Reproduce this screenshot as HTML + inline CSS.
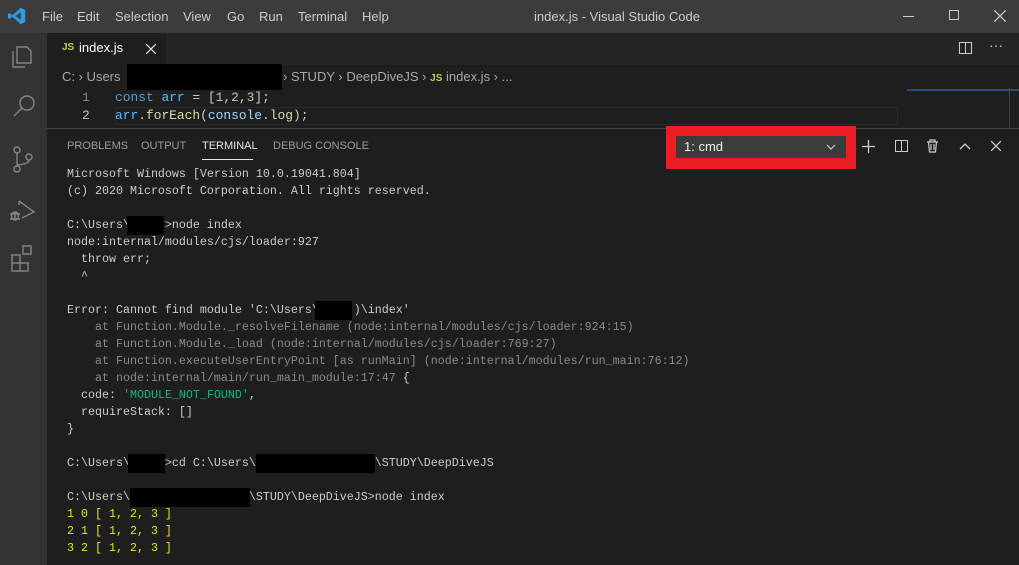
<!DOCTYPE html>
<html><head><meta charset="utf-8"><style>
*{margin:0;padding:0;box-sizing:border-box}
body{width:1019px;height:565px;background:#1e1e1e;position:relative;overflow:hidden;font-family:"Segoe UI","Liberation Sans",sans-serif;color:#ccc}
.a{position:absolute}
.t{position:absolute;left:67px;font-family:"Liberation Mono",monospace;font-size:11.67px;white-space:pre;color:#cccccc;line-height:17px}
.e{font-size:12.9px;line-height:18px}
.g{color:#8a8a8a}
.y{color:#e5e510}
.gr{color:#0dbc79}
.bk{position:absolute;background:#000}
.m{position:absolute;top:9px;font-size:13px;color:#ccc}
</style></head><body>
<div class="a" style="left:0;top:0;width:1019px;height:33px;background:#3c3c3c"></div>
<svg class="a" style="left:8px;top:7px" width="18" height="18" viewBox="0 0 24 24"><path d="M17 1 L23 4 V20 L17 23 L6 13 L2 16 L0 15 V9 L2 8 L6 11 Z M17 7 L10 12 L17 17 Z" fill="#2b9be6"/></svg>
<span class="m" style="left:42px">File</span><span class="m" style="left:77px">Edit</span><span class="m" style="left:115px">Selection</span><span class="m" style="left:183px">View</span><span class="m" style="left:227px">Go</span><span class="m" style="left:259px">Run</span><span class="m" style="left:298px">Terminal</span><span class="m" style="left:362px">Help</span>
<span class="m" style="left:534px">index.js - Visual Studio Code</span>
<div class="a" style="left:903px;top:16px;width:11px;height:1px;background:#ccc"></div>
<div class="a" style="left:949px;top:10px;width:10px;height:10px;border:1px solid #ccc"></div>
<svg class="a" style="left:994px;top:10px" width="12" height="12" stroke="#ccc" stroke-width="1.2"><path d="M0 0L12 12M12 0L0 12"/></svg>
<div class="a" style="left:0;top:33px;width:47px;height:532px;background:#333"></div>
<svg class="a" style="left:0;top:33px" width="47" height="250" fill="none" stroke="#858585" stroke-width="1.4">
<path d="M17 14h10l4 4v12H17z M13 18v16h12"/>
<circle cx="27" cy="70" r="7"/><path d="M22 75l-8 8"/>
<circle cx="17" cy="117" r="3"/><circle cx="17" cy="136" r="3"/><circle cx="29" cy="124" r="3"/><path d="M17 120v13 M29 127c0 5-12 4-12 6"/>
<path d="M19 168v4 M19 168l15 11-12 6" /><ellipse cx="15" cy="183" rx="3.5" ry="4"/><path d="M10 181h10 M10 186h10 M15 179v8"/>
<path d="M12 222h8v8h-8z M12 230h8v8h-8z M20 230h8v8h-8z M23 213h8v8h-8z"/>
</svg>
<div class="a" style="left:47px;top:33px;width:972px;height:32px;background:#252526"></div>
<div class="a" style="left:47px;top:33px;width:119px;height:32px;background:#1e1e1e"></div>
<span class="a" style="left:62px;top:42px;font-size:10px;font-weight:bold;color:#cbcb41">JS</span>
<span class="a" style="left:79px;top:40px;font-size:13px;color:#fff">index.js</span>
<svg class="a" style="left:146px;top:44px" width="10" height="10" stroke="#ddd" stroke-width="1.3"><path d="M0 0L10 10M10 0L0 10"/></svg>
<div class="a" style="left:959px;top:42px;width:13px;height:12px;border:1px solid #ccc"></div><div class="a" style="left:965px;top:42px;width:1px;height:12px;background:#ccc"></div>
<span class="a" style="left:989px;top:37px;font-size:14px;color:#ccc">···</span>
<div class="a" style="left:62px;top:69px;font-size:13px;color:#a9a9a9;white-space:pre">C: › Users</div>
<div class="bk" style="left:127px;top:64px;width:155px;height:26px"></div>
<div class="a" style="left:283px;top:69px;font-size:13px;color:#a9a9a9;white-space:pre">› STUDY › DeepDiveJS › <span style="color:#cbcb41;font-size:10px;font-weight:bold">JS</span> index.js › ...</div>
<div class="a" style="left:115px;top:107px;width:783px;height:18px;border:1px solid #282828"></div>
<div class="t e" style="left:82px;top:89px;color:#858585">1</div>
<div class="t e" style="left:82px;top:107px;color:#c6c6c6">2</div>
<div class="t e" style="left:115px;top:89px"><span style="color:#569cd6">const</span> <span style="color:#4fc1ff">arr</span> = [<span style="color:#b5cea8">1</span>,<span style="color:#b5cea8">2</span>,<span style="color:#b5cea8">3</span>];</div>
<div class="t e" style="left:115px;top:107px"><span style="color:#4fc1ff">arr</span>.<span style="color:#dcdcaa">forEach</span>(<span style="color:#9cdcfe">console</span>.<span style="color:#dcdcaa">log</span>);</div>
<div class="a" style="left:907px;top:89px;width:112px;height:2px;background:#264f78"></div>
<div class="a" style="left:1009px;top:88px;width:1px;height:40px;background:#444"></div>
<div class="a" style="left:47px;top:128px;width:972px;height:1px;background:#444"></div>
<span class="a" style="left:67px;top:140px;font-size:11px;color:#9d9d9d">PROBLEMS</span>
<span class="a" style="left:141px;top:140px;font-size:11px;color:#9d9d9d">OUTPUT</span>
<span class="a" style="left:202px;top:140px;font-size:11px;color:#e7e7e7">TERMINAL</span>
<div class="a" style="left:202px;top:159px;width:51px;height:1px;background:#e7e7e7"></div>
<span class="a" style="left:273px;top:140px;font-size:11px;color:#9d9d9d">DEBUG CONSOLE</span>
<div class="a" style="left:666px;top:126px;width:190px;height:43px;background:#ec1c24"></div>
<div class="a" style="left:676px;top:136px;width:170px;height:22px;background:#3c3c3c"></div>
<span class="a" style="left:684px;top:139px;font-size:13px;color:#f0f0f0">1: cmd</span>
<svg class="a" style="left:826px;top:144px" width="10" height="6" fill="none" stroke="#ccc" stroke-width="1.2"><path d="M1 1l4 4 4-4"/></svg>
<svg class="a" style="left:862px;top:140px" width="13" height="13" stroke="#ccc" stroke-width="1.3"><path d="M6.5 0v13M0 6.5h13"/></svg>
<div class="a" style="left:895px;top:140px;width:13px;height:12px;border:1px solid #ccc"></div><div class="a" style="left:901px;top:140px;width:1px;height:12px;background:#ccc"></div>
<svg class="a" style="left:926px;top:139px" width="13" height="14" fill="none" stroke="#ccc" stroke-width="1.2"><path d="M1 3h11 M4 3V1h5v2 M2.5 3l1 10h6l1-10 M5 5v6 M8 5v6"/></svg>
<svg class="a" style="left:959px;top:142px" width="12" height="8" fill="none" stroke="#ccc" stroke-width="1.3"><path d="M1 7l5-5 5 5"/></svg>
<svg class="a" style="left:991px;top:141px" width="10" height="10" stroke="#ccc" stroke-width="1.3"><path d="M0 0L10 10M10 0L0 10"/></svg>
<div class="t" style="top:166px">Microsoft Windows [Version 10.0.19041.804]</div>
<div class="t" style="top:183px">(c) 2020 Microsoft Corporation. All rights reserved.</div>
<div class="t" style="top:217px">C:\Users\     >node index</div>
<div class="t" style="top:234px">node:internal/modules/cjs/loader:927</div>
<div class="t" style="top:251px">  throw err;</div>
<div class="t" style="top:268px">  ^</div>
<div class="t" style="top:302px">Error: Cannot find module 'C:\Users\     )\index'</div>
<div class="t g" style="top:319px">    at Function.Module._resolveFilename (node:internal/modules/cjs/loader:924:15)</div>
<div class="t g" style="top:336px">    at Function.Module._load (node:internal/modules/cjs/loader:769:27)</div>
<div class="t g" style="top:353px">    at Function.executeUserEntryPoint [as runMain] (node:internal/modules/run_main:76:12)</div>
<div class="t" style="top:370px"><span class="g">    at node:internal/main/run_main_module:17:47</span> {</div>
<div class="t" style="top:387px">  code: <span class="gr">'MODULE_NOT_FOUND'</span>,</div>
<div class="t" style="top:404px">  requireStack: []</div>
<div class="t" style="top:421px">}</div>
<div class="t" style="top:455px">C:\Users\     >cd C:\Users\                 \STUDY\DeepDiveJS</div>
<div class="t" style="top:489px">C:\Users\                 \STUDY\DeepDiveJS>node index</div>
<div class="t y" style="top:506px">1 0 [ 1, 2, 3 ]</div>
<div class="t y" style="top:523px">2 1 [ 1, 2, 3 ]</div>
<div class="t y" style="top:540px">3 2 [ 1, 2, 3 ]</div>
<div class="bk" style="left:127px;top:216px;width:37px;height:19px"></div>
<div class="bk" style="left:315px;top:301px;width:37px;height:19px"></div>
<div class="bk" style="left:128px;top:454px;width:37px;height:19px"></div>
<div class="bk" style="left:256px;top:454px;width:119px;height:19px"></div>
<div class="bk" style="left:130px;top:488px;width:120px;height:19px"></div>
</body></html>
